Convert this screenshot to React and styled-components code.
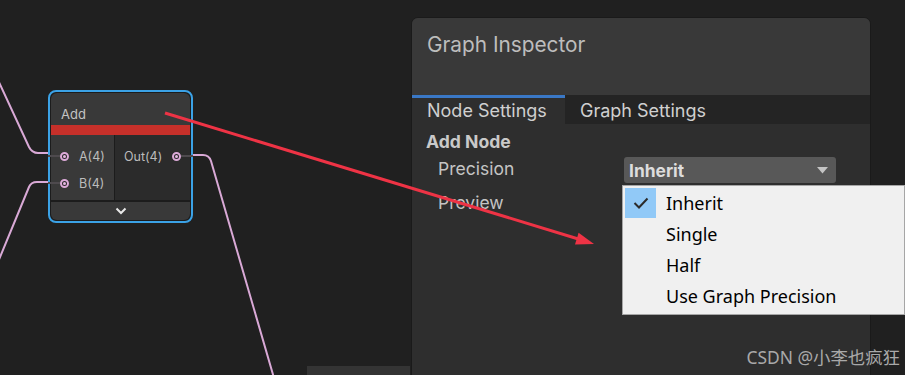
import React from "react";
import styled, { createGlobalStyle } from "styled-components";

const Global = createGlobalStyle`
  html, body { margin: 0; padding: 0; background: #202020; }
  body { font-family: Inter, "Noto Sans", sans-serif; }
`;

const Canvas = styled.div`
  position: relative;
  width: 905px;
  height: 375px;
  overflow: hidden;
  background: #202020;
`;

const Overlay = styled.svg`
  position: absolute;
  left: 0;
  top: 0;
  width: 905px;
  height: 375px;
  pointer-events: none;
  z-index: ${(p) => p.$z || 0};
`;

/* ---------- graph node ---------- */
const Node = styled.div`
  position: absolute;
  left: 48px;
  top: 90px;
  width: 139px;
  border: 2px solid #3ba2e6;
  border-radius: 8px;
  background: #1c1c1c;
  padding: 1px;
  display: flex;
  flex-direction: column;
  z-index: 1;
`;

const NodeHeader = styled.div`
  height: 32px;
  box-sizing: border-box;
  background: #393939;
  border-radius: 6px 6px 0 0;
  display: flex;
  align-items: flex-end;
  padding: 0 0 3px 10px;
  font-size: 13px;
  line-height: 16px;
  color: #c4c4c4;
`;

const ColorBar = styled.div`
  height: 10px;
  background: #c6302a;
`;

const PortsRow = styled.div`
  display: grid;
  grid-template-columns: 63px 1fr;
  gap: 1px;
  height: 65px;
`;

const PortColumn = styled.div`
  background: ${(p) => (p.$side === "in" ? "#393939" : "#2b2b2b")};
  display: flex;
  flex-direction: column;
  padding-top: 11px;
  gap: 7px;
`;

const Port = styled.div`
  position: relative;
  height: 20px;
  display: flex;
  align-items: center;
  justify-content: ${(p) => (p.$side === "in" ? "flex-start" : "space-between")};
  padding: ${(p) => (p.$side === "in" ? "0 0 0 9px" : "0 9px 0 9px")};
  font-size: 12.5px;
  color: #bcbcbc;
  gap: 10px;
`;

const Stub = styled.span`
  position: absolute;
  top: 9px;
  height: 2px;
  width: 12px;
  background: #4e4a4e;
  ${(p) => (p.$side === "in" ? "left: -3px;" : "right: -3px;")}
`;

const Dot = styled.span`
  position: relative;
  width: 9px;
  height: 9px;
  box-sizing: border-box;
  border-radius: 50%;
  border: 2px solid #dcaad8;
  background: #2a2a2a;
  display: flex;
  align-items: center;
  justify-content: center;
  &::after {
    content: "";
    width: 3px;
    height: 3px;
    border-radius: 50%;
    background: #e6b8e2;
  }
`;

const NodeFooter = styled.div`
  margin-top: 2px;
  height: 18px;
  background: #393939;
  border-radius: 0 0 6px 6px;
  display: flex;
  align-items: center;
  justify-content: center;
`;

/* ---------- misc panel at bottom ---------- */
const BottomStub = styled.div`
  position: absolute;
  left: 307px;
  top: 366px;
  width: 103px;
  height: 20px;
  background: #343434;
`;

/* ---------- inspector window ---------- */
const Inspector = styled.div`
  position: absolute;
  left: 411px;
  top: 17px;
  width: 458px;
  height: 380px;
  background: #2e2e2e;
  border: 1px solid #1a1a1a;
  border-radius: 7px 7px 0 0;
  overflow: hidden;
  display: flex;
  flex-direction: column;
  z-index: 2;
`;

const InspectorHeader = styled.div`
  height: 77px;
  background: #393939;
  padding: 15px 0 0 15px;
  box-sizing: border-box;
  font-size: 20.8px;
  line-height: 24px;
  color: #bdbdbd;
`;

const TabBar = styled.div`
  height: 29px;
  background: #242424;
  display: flex;
`;

const Tab = styled.div`
  box-sizing: border-box;
  height: 29px;
  width: ${(p) => p.$w}px;
  padding-left: 15px;
  display: flex;
  align-items: center;
  font-size: 18px;
  color: #d0d0d0;
  background: ${(p) => (p.$active ? "#2e2e2e" : "transparent")};
  border-top: 3px solid ${(p) => (p.$active ? "#3a78c6" : "transparent")};
  padding-bottom: 2px;
`;

const Body = styled.div`
  padding: 6px 34px 0 14px;
  display: flex;
  flex-direction: column;
`;

const SectionTitle = styled.div`
  font-size: 17.6px;
  font-weight: 700;
  line-height: 24px;
  color: #c9c9c9;
`;

const PropRow = styled.div`
  display: grid;
  grid-template-columns: 186px 1fr;
  align-items: center;
  padding-left: 12px;
  height: 30px;
  margin-bottom: ${(p) => p.$mb || 0}px;
`;

const PropLabel = styled.div`
  font-size: 17.5px;
  color: #c4c4c4;
  margin-top: -2px;
`;

const Field = styled.div`
  height: 26px;
  margin-top: 2px;
  background: #585858;
  border-radius: 3px;
  display: flex;
  align-items: center;
  justify-content: space-between;
  padding: 0 8px 0 5px;
  font-size: 17.4px;
  font-weight: 700;
  color: #dddddd;
`;

/* ---------- popup menu ---------- */
const Menu = styled.div`
  position: absolute;
  left: 622px;
  top: 185px;
  width: 283px;
  box-sizing: border-box;
  background: #f0f0f0;
  border: 1px solid #a6a6a6;
  padding: 1px 2px 3px 2px;
  z-index: 4;
  font-family: "Noto Sans", "Open Sans", sans-serif;
`;

const MenuItem = styled.div`
  display: flex;
  align-items: center;
  height: 31px;
  font-size: 18px;
  color: #000;
`;

const CheckCell = styled.div`
  width: 31px;
  height: 30px;
  background: ${(p) => (p.$checked ? "#91c9f7" : "transparent")};
  display: flex;
  align-items: center;
  justify-content: center;
  margin-right: 10px;
`;

const Watermark = styled.div`
  position: absolute;
  right: 5px;
  bottom: 6px;
  font-family: "Noto Sans", "Noto Sans CJK SC", sans-serif;
  font-size: 17.4px;
  color: #a9a9a9;
  z-index: 5;
`;

const InPort = ({ label }) => (
  <Port $side="in">
    <Stub $side="in" />
    <Dot />
    <span>{label}</span>
  </Port>
);

export default function App() {
  return (
    <>
      <Global />
      <Canvas>
        <Overlay>
          <g fill="none" stroke="#d9a9d6" strokeWidth="2">
            <path d="M -2 80 L 29 147 Q 32 153 38 153 L 50 153" />
            <path d="M -2 262 L 29 187 Q 31 182 37 182 L 50 182" />
            <path d="M 190 155 L 203 155 Q 209 155 211 161 L 274 378" />
          </g>
        </Overlay>

        <Node>
          <NodeHeader>Add</NodeHeader>
          <ColorBar />
          <PortsRow>
            <PortColumn $side="in">
              <InPort label="A(4)" />
              <InPort label="B(4)" />
            </PortColumn>
            <PortColumn $side="out">
              <Port $side="out">
                <span>Out(4)</span>
                <Dot />
                <Stub $side="out" />
              </Port>
            </PortColumn>
          </PortsRow>
          <NodeFooter>
            <svg width="12" height="8" viewBox="0 0 12 8">
              <path d="M1.5 1.5 L6 6 L10.5 1.5" fill="none" stroke="#e8e8e8" strokeWidth="2" />
            </svg>
          </NodeFooter>
        </Node>

        <BottomStub />

        <Inspector>
          <InspectorHeader>Graph Inspector</InspectorHeader>
          <TabBar>
            <Tab $active $w={153}>Node Settings</Tab>
            <Tab $w={160}>Graph Settings</Tab>
          </TabBar>
          <Body>
            <SectionTitle>Add Node</SectionTitle>
            <PropRow $mb={4}>
              <PropLabel>Precision</PropLabel>
              <Field>
                <span>Inherit</span>
                <svg width="11" height="7" viewBox="0 0 11 7">
                  <path d="M0 0 L11 0 L5.5 6.5 Z" fill="#c4c4c4" />
                </svg>
              </Field>
            </PropRow>
            <PropRow>
              <PropLabel>Preview</PropLabel>
            </PropRow>
          </Body>
        </Inspector>

        <Overlay $z={3}>
          <line x1="165" y1="113" x2="580" y2="239.5" stroke="#ee3345" strokeWidth="3" />
          <polygon points="594,244 575,244.6 578.6,232.8" fill="#ee3345" />
        </Overlay>

        <Menu>
          {["Inherit", "Single", "Half", "Use Graph Precision"].map((t, i) => (
            <MenuItem key={t}>
              <CheckCell $checked={i === 0}>
                {i === 0 && (
                  <svg width="18" height="14" viewBox="0 0 18 14">
                    <path d="M2.5 7 L7 11.5 L15.5 2.5" fill="none" stroke="#2b2b2b" strokeWidth="2" />
                  </svg>
                )}
              </CheckCell>
              {t}
            </MenuItem>
          ))}
        </Menu>

        <Watermark>CSDN @小李也疯狂</Watermark>
      </Canvas>
    </>
  );
}
